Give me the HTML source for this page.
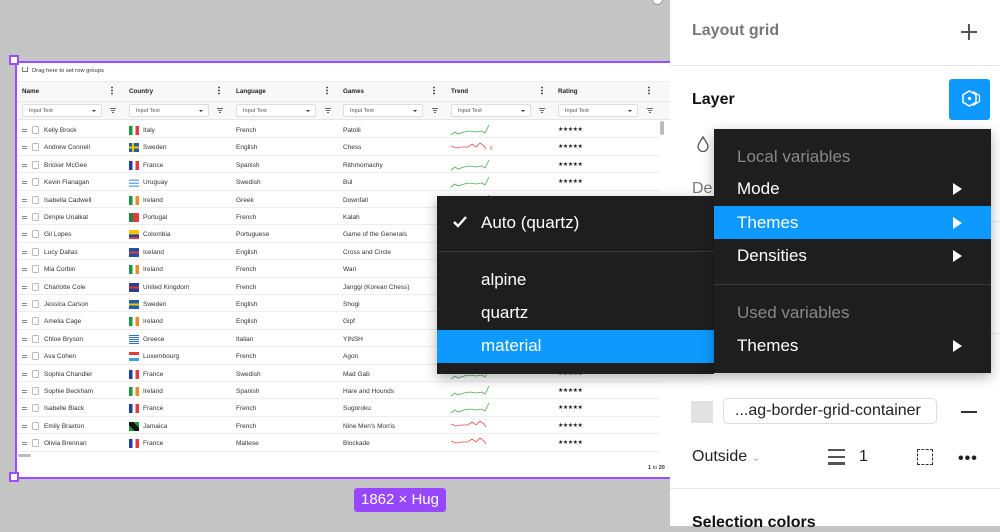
<!DOCTYPE html>
<html><head><meta charset="utf-8"><style>
*{margin:0;padding:0;box-sizing:border-box}
body{width:1000px;height:526px;overflow:hidden;position:relative;background:#c4c4c4;font-family:"Liberation Sans",Arial,sans-serif}
.a{position:absolute}
#frame{left:15px;top:61px;width:670px;height:418px;border:2px solid #9b4dff;background:#fff}
.h{width:10px;height:10px;background:#fff;border:2px solid #9b4dff;position:absolute}
.t{font-size:6.3px;color:#333;white-space:nowrap}
.row{position:absolute;left:18px;width:642px;height:17.4px;border-bottom:1px solid #eee;font-size:6.5px;color:#333}
.row span{position:absolute;top:6px;white-space:nowrap}
.row .dr{left:4px;top:8px;width:5px;height:3px;border-top:1px solid #888;border-bottom:1px solid #888}
.row .cb{left:14px;top:5px;width:7px;height:8px;border:1px solid #bbb;border-radius:1.5px}
.row .fl{left:111px;top:5px;width:10px;height:9px}
.row svg{position:absolute;left:432px;top:2px}
.row .st{left:540px;top:5px;font-size:6px;letter-spacing:-.5px;color:#222}
.hd{font-size:6.3px;font-weight:bold;color:#222;position:absolute;top:88px}
.dots{position:absolute;top:86px;width:2px;height:9px;background:radial-gradient(circle,#555 0.8px,transparent 1px) 0 0/2px 3px}
.in{position:absolute;top:104px;width:80px;height:13px;border:1px solid #ddd;border-radius:2px;font-size:5.5px;color:#555;padding:3px 0 0 6px;background:#fff}
.in:after{content:"";position:absolute;right:5px;top:5px;border:2px solid transparent;border-top:2.5px solid #333}
.fi{position:absolute;top:108px;width:6px;height:5px;border-top:1px solid #666}
.fi:before{content:"";position:absolute;left:1px;top:1px;width:4px;border-top:1px solid #666}
.fi:after{content:"";position:absolute;left:2px;top:3px;width:2px;border-top:1px solid #666}
#rp{left:670px;top:0;width:330px;height:526px;background:#fff}
.mi{position:absolute;font-size:17px;color:#fff;white-space:nowrap}
.tri{position:absolute;left:953px;width:0;height:0;border-left:9px solid #fff;border-top:6px solid transparent;border-bottom:6px solid transparent}
</style></head><body>
<div class="a" style="left:652px;top:-6px;width:11px;height:11px;border-radius:50%;background:#fff;border:1px solid #999"></div>
<div class="a" id="frame"></div>
<div class="a" style="left:17px;top:63px;width:653px;height:19px;background:#fff;border-bottom:1px solid #eee"></div>
<div class="a t" style="left:22px;top:67px;width:6px;height:5px;border:1px solid #777;border-top:none"></div>
<div class="a t" style="left:32px;top:68px;font-size:5.8px">Drag here to set row groups</div>
<div class="a" style="left:18px;top:82px;width:652px;height:38px;background:#f8f8f8;border-bottom:1px solid #e6e6e6"></div>
<div class="a" style="left:18px;top:101px;width:652px;height:1px;background:#e8e8e8"></div>
<div class="hd" style="left:22px">Name</div><div class="dots" style="left:111px"></div>
<div class="hd" style="left:129px">Country</div><div class="dots" style="left:218px"></div>
<div class="hd" style="left:236px">Language</div><div class="dots" style="left:326px"></div>
<div class="hd" style="left:343px">Games</div><div class="dots" style="left:433px"></div>
<div class="hd" style="left:451px">Trend</div><div class="dots" style="left:541px"></div>
<div class="hd" style="left:558px">Rating</div><div class="dots" style="left:648px"></div>
<div class="in" style="left:22px">Input Text</div><div class="fi" style="left:110px"></div>
<div class="in" style="left:129px">Input Text</div><div class="fi" style="left:217px"></div>
<div class="in" style="left:236px">Input Text</div><div class="fi" style="left:325px"></div>
<div class="in" style="left:343px">Input Text</div><div class="fi" style="left:432px"></div>
<div class="in" style="left:451px">Input Text</div><div class="fi" style="left:539px"></div>
<div class="in" style="left:558px">Input Text</div><div class="fi" style="left:647px"></div>
<div class="a" style="left:660px;top:121px;width:4px;height:14px;border-radius:2px;background:#bbb"></div>
<div class="a" style="left:18px;top:451px;width:642px;height:1px;background:#e4e4e4"></div>
<div class="a" style="left:18px;top:454px;width:13px;height:3px;border-radius:2px;background:#bbb"></div>
<div class="a t" style="left:648px;top:465px;font-size:5.5px"><b>1</b> to <b>20</b></div>

<div class="row" style="top:121px"><i class="dr a"></i><i class="cb a"></i><span style="left:26px">Kelly Brock</span><span class="fl" style="background:linear-gradient(90deg,#1a9a3c 33%,#fff 33% 66%,#e23b3b 66%)"></span><span style="left:125px">Italy</span><span style="left:218px">French</span><span style="left:325px">Patolli</span><svg width="45" height="14"><path d="M1,12 L5,9 L8,11 L14,9 L20,8 L26,9 L32,8 L35,10 L39,2" fill="none" stroke="#4caf50" stroke-width=".8"/></svg><span class="st">★★★★★</span></div>
<div class="row" style="top:138.4px"><i class="dr a"></i><i class="cb a"></i><span style="left:26px">Andrew Connell</span><span class="fl" style="background:linear-gradient(#1d5fa8 38%,#f5c400 38% 62%,#1d5fa8 62%);"><i style="position:absolute;left:3px;top:0;width:2px;height:9px;background:#f5c400"></i></span><span style="left:125px">Sweden</span><span style="left:218px">English</span><span style="left:325px">Chess</span><svg width="45" height="14"><path d="M1,6 L6,8 L12,7 L18,7 L22,4 L26,7 L30,3 L34,6 L36,9" fill="none" stroke="#e94f4f" stroke-width=".8"/><text x="40" y="10" font-size="5" fill="#e94f4f">6</text></svg><span class="st">★★★★★</span></div>
<div class="row" style="top:155.8px"><i class="dr a"></i><i class="cb a"></i><span style="left:26px">Bricker McGee</span><span class="fl" style="background:linear-gradient(90deg,#1f3ea8 33%,#fff 33% 66%,#e23b3b 66%)"></span><span style="left:125px">France</span><span style="left:218px">Spanish</span><span style="left:325px">Rithmomachy</span><svg width="45" height="14"><path d="M1,12 L5,9 L8,11 L14,9 L20,8 L26,9 L32,8 L35,10 L39,2" fill="none" stroke="#4caf50" stroke-width=".8"/></svg><span class="st">★★★★★</span></div>
<div class="row" style="top:173.2px"><i class="dr a"></i><i class="cb a"></i><span style="left:26px">Kevin Flanagan</span><span class="fl" style="background:repeating-linear-gradient(#fff 0 1.5px,#7aaee0 1.5px 3px)"></span><span style="left:125px">Uruguay</span><span style="left:218px">Swedish</span><span style="left:325px">Bul</span><svg width="45" height="14"><path d="M1,12 L5,9 L8,11 L14,9 L20,8 L26,9 L32,8 L35,10 L39,2" fill="none" stroke="#4caf50" stroke-width=".8"/></svg><span class="st">★★★★★</span></div>
<div class="row" style="top:190.6px"><i class="dr a"></i><i class="cb a"></i><span style="left:26px">Isabella Cadwell</span><span class="fl" style="background:linear-gradient(90deg,#1a9a3c 33%,#fff 33% 66%,#f08a24 66%)"></span><span style="left:125px">Ireland</span><span style="left:218px">Greek</span><span style="left:325px">Downfall</span><svg width="45" height="14"><path d="M1,12 L5,9 L8,11 L14,9 L20,8 L26,9 L32,8 L35,10 L39,2" fill="none" stroke="#4caf50" stroke-width=".8"/></svg><span class="st">★★★★★</span></div>
<div class="row" style="top:208px"><i class="dr a"></i><i class="cb a"></i><span style="left:26px">Dimple Unalkat</span><span class="fl" style="background:linear-gradient(90deg,#1a8a3c 40%,#e23b3b 40%)"></span><span style="left:125px">Portugal</span><span style="left:218px">French</span><span style="left:325px">Kalah</span><span class="st">★★★★★</span></div>
<div class="row" style="top:225.4px"><i class="dr a"></i><i class="cb a"></i><span style="left:26px">Gil Lopes</span><span class="fl" style="background:linear-gradient(#f5c400 50%,#1f3ea8 50% 75%,#e23b3b 75%)"></span><span style="left:125px">Colombia</span><span style="left:218px">Portuguese</span><span style="left:325px">Game of the Generals</span><span class="st">★★★★★</span></div>
<div class="row" style="top:242.8px"><i class="dr a"></i><i class="cb a"></i><span style="left:26px">Lucy Dallas</span><span class="fl" style="background:linear-gradient(#1f4ea8 40%,#e23b3b 40% 60%,#1f4ea8 60%)"></span><span style="left:125px">Iceland</span><span style="left:218px">English</span><span style="left:325px">Cross and Circle</span><span class="st">★★★★★</span></div>
<div class="row" style="top:260.2px"><i class="dr a"></i><i class="cb a"></i><span style="left:26px">Mia Corbin</span><span class="fl" style="background:linear-gradient(90deg,#1a9a3c 33%,#fff 33% 66%,#f08a24 66%)"></span><span style="left:125px">Ireland</span><span style="left:218px">French</span><span style="left:325px">Wari</span><span class="st">★★★★★</span></div>
<div class="row" style="top:277.6px"><i class="dr a"></i><i class="cb a"></i><span style="left:26px">Charlotte Cole</span><span class="fl" style="background:linear-gradient(#2a3d8f 40%,#d33 40% 60%,#2a3d8f 60%)"></span><span style="left:125px">United Kingdom</span><span style="left:218px">French</span><span style="left:325px">Janggi (Korean Chess)</span><span class="st">★★★★★</span></div>
<div class="row" style="top:295px"><i class="dr a"></i><i class="cb a"></i><span style="left:26px">Jessica Carson</span><span class="fl" style="background:linear-gradient(#1d5fa8 38%,#f5c400 38% 62%,#1d5fa8 62%)"></span><span style="left:125px">Sweden</span><span style="left:218px">English</span><span style="left:325px">Shogi</span><span class="st">★★★★★</span></div>
<div class="row" style="top:312.4px"><i class="dr a"></i><i class="cb a"></i><span style="left:26px">Amelia Cage</span><span class="fl" style="background:linear-gradient(90deg,#1a9a3c 33%,#fff 33% 66%,#f08a24 66%)"></span><span style="left:125px">Ireland</span><span style="left:218px">English</span><span style="left:325px">Gipf</span><span class="st">★★★★★</span></div>
<div class="row" style="top:329.8px"><i class="dr a"></i><i class="cb a"></i><span style="left:26px">Chloe Bryson</span><span class="fl" style="background:repeating-linear-gradient(#2d6fc0 0 1px,#fff 1px 2px)"></span><span style="left:125px">Greece</span><span style="left:218px">Italian</span><span style="left:325px">YINSH</span><span class="st">★★★★★</span></div>
<div class="row" style="top:347.2px"><i class="dr a"></i><i class="cb a"></i><span style="left:26px">Ava Cohen</span><span class="fl" style="background:linear-gradient(#e23b3b 33%,#fff 33% 66%,#3fa0e0 66%)"></span><span style="left:125px">Luxembourg</span><span style="left:218px">French</span><span style="left:325px">Agon</span><span class="st">★★★★★</span></div>
<div class="row" style="top:364.6px"><i class="dr a"></i><i class="cb a"></i><span style="left:26px">Sophia Chandler</span><span class="fl" style="background:linear-gradient(90deg,#1f3ea8 33%,#fff 33% 66%,#e23b3b 66%)"></span><span style="left:125px">France</span><span style="left:218px">Swedish</span><span style="left:325px">Mad Gab</span><svg width="45" height="14"><path d="M1,12 L5,9 L8,11 L14,9 L20,8 L26,9 L32,8 L35,10 L39,2" fill="none" stroke="#4caf50" stroke-width=".8"/></svg><span class="st">★★★★★</span></div>
<div class="row" style="top:382px"><i class="dr a"></i><i class="cb a"></i><span style="left:26px">Sophie Beckham</span><span class="fl" style="background:linear-gradient(90deg,#1a9a3c 33%,#fff 33% 66%,#f08a24 66%)"></span><span style="left:125px">Ireland</span><span style="left:218px">Spanish</span><span style="left:325px">Hare and Hounds</span><svg width="45" height="14"><path d="M1,12 L5,9 L8,11 L14,9 L20,8 L26,9 L32,8 L35,10 L39,2" fill="none" stroke="#4caf50" stroke-width=".8"/></svg><span class="st">★★★★★</span></div>
<div class="row" style="top:399.4px"><i class="dr a"></i><i class="cb a"></i><span style="left:26px">Isabelle Black</span><span class="fl" style="background:linear-gradient(90deg,#1f3ea8 33%,#fff 33% 66%,#e23b3b 66%)"></span><span style="left:125px">France</span><span style="left:218px">French</span><span style="left:325px">Sugoroku</span><svg width="45" height="14"><path d="M1,12 L5,9 L8,11 L14,9 L20,8 L26,9 L32,8 L35,10 L39,2" fill="none" stroke="#4caf50" stroke-width=".8"/></svg><span class="st">★★★★★</span></div>
<div class="row" style="top:416.8px"><i class="dr a"></i><i class="cb a"></i><span style="left:26px">Emily Braxton</span><span class="fl" style="background:linear-gradient(45deg,#1a9a3c 30%,#111 30% 70%,#1a9a3c 70%)"></span><span style="left:125px">Jamaica</span><span style="left:218px">French</span><span style="left:325px">Nine Men's Morris</span><svg width="45" height="14"><path d="M1,5 L6,7 L12,6 L18,6 L22,3 L26,6 L30,2 L34,5 L36,8" fill="none" stroke="#e94f4f" stroke-width=".8"/></svg><span class="st">★★★★★</span></div>
<div class="row" style="top:434.2px"><i class="dr a"></i><i class="cb a"></i><span style="left:26px">Olivia Brennan</span><span class="fl" style="background:linear-gradient(90deg,#1f3ea8 33%,#fff 33% 66%,#e23b3b 66%)"></span><span style="left:125px">France</span><span style="left:218px">Maltese</span><span style="left:325px">Blockade</span><svg width="45" height="14"><path d="M1,5 L6,7 L12,6 L18,6 L22,3 L26,6 L30,2 L34,5 L36,8" fill="none" stroke="#e94f4f" stroke-width=".8"/></svg><span class="st">★★★★★</span></div>

<div class="h" style="left:9px;top:55px"></div>
<div class="h" style="left:9px;top:472px"></div>
<div class="a" style="left:354px;top:488px;width:92px;height:24px;background:#9747ff;border-radius:3px;color:#fff;font-size:15px;text-align:center;line-height:24px">1862 × Hug</div>

<div class="a" id="rp">
 <div class="a" style="left:22px;top:22px;font-size:16px;font-weight:bold;color:#777">Layout grid</div>
 <div class="a" style="left:291px;top:31px;width:16px;height:1.5px;background:#555"></div>
 <div class="a" style="left:298px;top:24px;width:1.5px;height:16px;background:#555"></div>
 <div class="a" style="left:0;top:65px;width:330px;height:1px;background:#e6e6e6"></div>
 <div class="a" style="left:22px;top:91px;font-size:16px;font-weight:bold;color:#111">Layer</div>
 <div class="a" style="left:279px;top:79px;width:41px;height:41px;background:#0d99ff;border-radius:3px">
  <svg width="41" height="41"><path d="M20.5,12 L27,15.7 L27,23.3 L20.5,27 L14,23.3 L14,15.7 Z" fill="none" stroke="#fff" stroke-width="1.5"/><circle cx="20.5" cy="19.5" r="1.6" fill="#fff"/><path d="M24,12.5 L30.5,16.5 L30.5,22.5 L24,26.5" fill="none" stroke="#fff" stroke-width="1.3"/></svg>
 </div>
 <svg class="a" style="left:26px;top:136px" width="14" height="16"><path d="M7,1 C4,6 2,8 2,10.5 A5,5 0 0 0 12,10.5 C12,8 10,6 7,1 Z" fill="none" stroke="#555" stroke-width="1.3"/></svg>
 <div class="a" style="left:22px;top:180px;font-size:16px;color:#777">De</div>
 <div class="a" style="left:0;top:221px;width:330px;height:1px;background:#e6e6e6"></div>
 <div class="a" style="left:0;top:333px;width:330px;height:1px;background:#e6e6e6"></div>
 <div class="a" style="left:21px;top:401px;width:22px;height:22px;background:#e2e2e2"></div>
 <div class="a" style="left:53px;top:398px;width:214px;height:26px;border:1px solid #ddd;border-radius:5px;font-size:16px;color:#222;padding:3px 0 0 11px;white-space:nowrap">...ag-border-grid-container</div>
 <div class="a" style="left:291px;top:411px;width:16px;height:1.5px;background:#333"></div>
 <div class="a" style="left:22px;top:448px;font-size:16px;color:#222">Outside <span style="color:#aaa;font-size:11px">⌄</span></div>
 <div class="a" style="left:158px;top:449px;width:17px;height:16px;border-top:2px solid #555;border-bottom:3px solid #555"><i style="position:absolute;top:5px;left:0;width:17px;height:2px;background:#555"></i></div>
 <div class="a" style="left:189px;top:448px;font-size:16px;color:#222">1</div>
 <div class="a" style="left:247px;top:449px;width:16px;height:16px;border:1.5px dashed #333"></div>
 <div class="a" style="left:288px;top:450px;font-size:16px;letter-spacing:1px;color:#222;font-weight:bold">•••</div>
 <div class="a" style="left:0;top:488px;width:330px;height:1px;background:#e6e6e6"></div>
 <div class="a" style="left:22px;top:514px;font-size:16px;font-weight:bold;color:#111">Selection colors</div>
</div>

<div class="a" style="left:437px;top:196px;width:277px;height:178px;background:#1e1e1e;box-shadow:0 4px 12px rgba(0,0,0,.3)">
 <div class="a" style="left:0;top:55px;width:277px;height:1px;background:#383838"></div>
 <div class="a" style="left:0;top:134px;width:277px;height:33px;background:#0d99ff"></div>
</div>
<svg class="a" style="left:452px;top:215px" width="16" height="14"><path d="M2,7 L6,11 L14,2" fill="none" stroke="#fff" stroke-width="2.4"/></svg>
<div class="mi" style="left:481px;top:213px">Auto (quartz)</div>
<div class="mi" style="left:481px;top:270px">alpine</div>
<div class="mi" style="left:481px;top:303px">quartz</div>
<div class="mi" style="left:481px;top:336px">material</div>

<div class="a" style="left:714px;top:129px;width:277px;height:244px;background:#1e1e1e;box-shadow:0 4px 12px rgba(0,0,0,.3)">
 <div class="a" style="left:0;top:77px;width:277px;height:33px;background:#0d99ff"></div>
 <div class="a" style="left:0;top:155px;width:277px;height:1px;background:#383838"></div>
</div>
<div class="a" style="left:961px;top:121px;width:0;height:0;border:8px solid transparent;border-bottom-color:#1e1e1e"></div>
<div class="mi" style="left:737px;top:147px;color:#888">Local variables</div>
<div class="mi" style="left:737px;top:179px">Mode</div><div class="tri" style="top:183px"></div>
<div class="mi" style="left:737px;top:213px">Themes</div><div class="tri" style="top:217px"></div>
<div class="mi" style="left:737px;top:246px">Densities</div><div class="tri" style="top:250px"></div>
<div class="mi" style="left:737px;top:303px;color:#888">Used variables</div>
<div class="mi" style="left:737px;top:336px">Themes</div><div class="tri" style="top:340px"></div>
</body></html>
